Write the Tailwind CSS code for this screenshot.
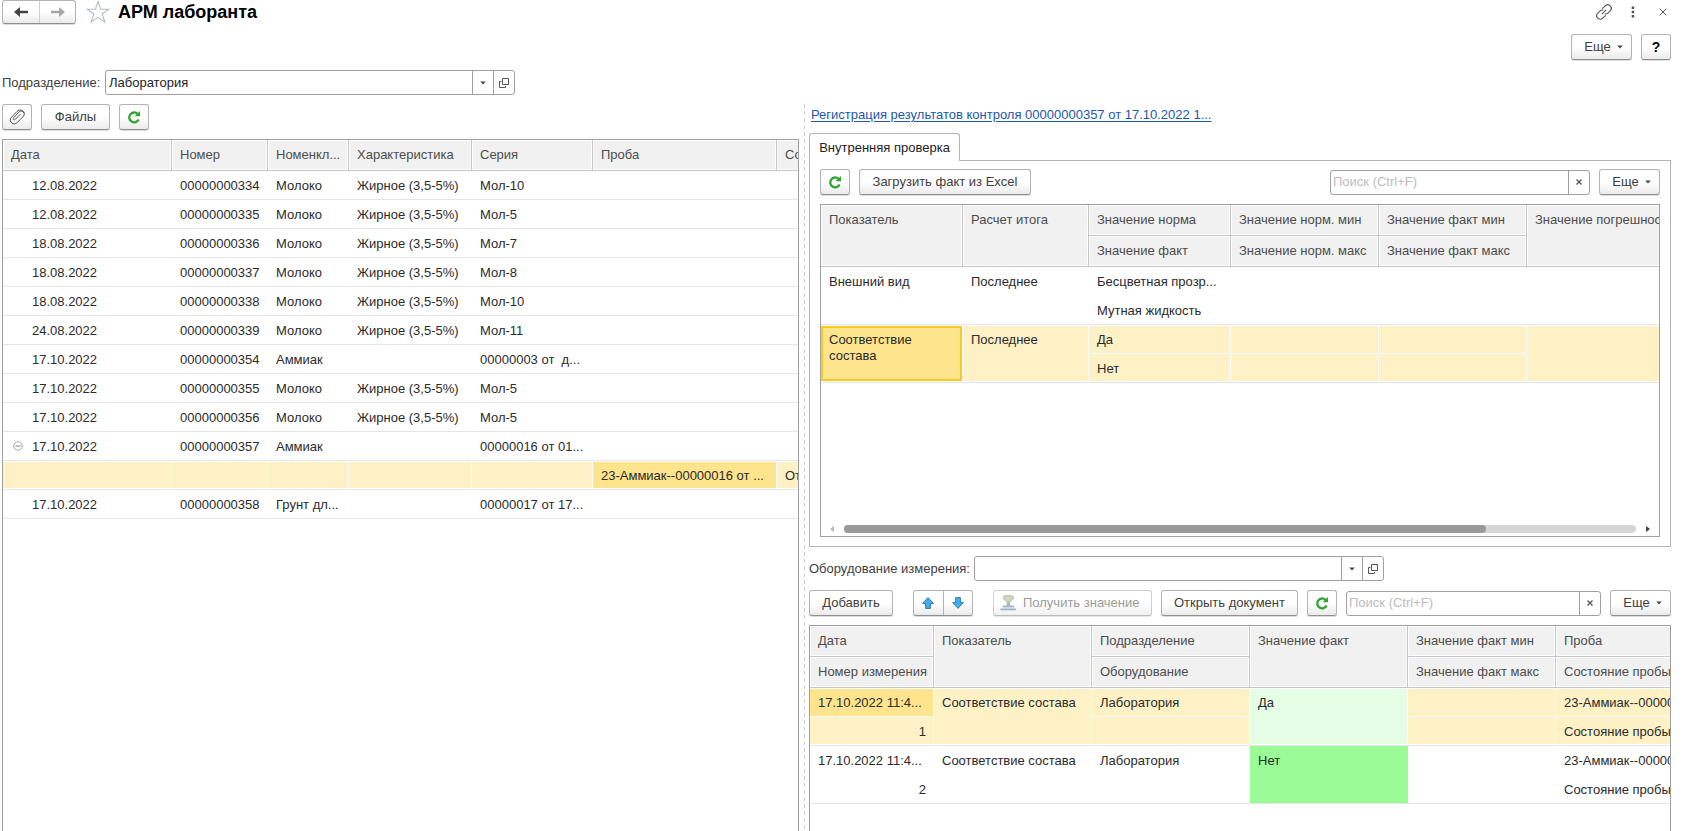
<!DOCTYPE html>
<html lang="ru">
<head>
<meta charset="utf-8">
<title>АРМ лаборанта</title>
<script src="https://cdn.jsdelivr.net/npm/@tailwindcss/browser@4"></script>
</head>
<body class="bg-white font-['Liberation_Sans',Arial,sans-serif] text-[13px] leading-4 text-[#404040]">
<svg class="hidden" aria-hidden="true">
  <symbol id="refresh" viewBox="0 0 14 14">
    <path d="M10.6 3.9A4.9 4.9 0 1 0 11.6 9.4" fill="none" stroke="#2fa42f" stroke-width="2.3"/>
    <path d="M13 0.9V6.3H7.6z" fill="#2fa42f"/>
  </symbol>
  <symbol id="caret" viewBox="0 0 6 4"><path d="M0.3 0.5H5.7L3 3.5z" fill="#444"/></symbol>
  <symbol id="open" viewBox="0 0 10 10">
    <path d="M3.5 0.5H9.5V6.5H3.5zM2.5 3.5H0.5V9.5H6.5V8" fill="none" stroke="#555"/>
  </symbol>
  <symbol id="cross" viewBox="0 0 8 8"><path d="M1.5 1.5L6.5 6.5M6.5 1.5L1.5 6.5" stroke="#555" stroke-width="1.3"/></symbol>
</svg>

<main class="flex h-screen flex-col overflow-hidden pl-[2px] pr-3">
  <header class="flex h-[26px] shrink-0 items-start">
    <div class="flex h-6 rounded-[3px] border border-[#b3b3b3] border-b-[#909090] bg-linear-to-b from-white from-50% to-[#ebebeb] shadow-[0_1px_0_#ddd]">
      <button class="flex w-9 items-center justify-center" aria-label="Назад">
        <svg class="h-3 w-[14px]" viewBox="0 0 14 12"><path d="M0 6L6 1V4.8H14V7.2H6V11z" fill="#444"/></svg>
      </button>
      <button class="flex w-9 items-center justify-center border-l border-[#cfcfcf]" aria-label="Вперед">
        <svg class="h-3 w-[14px]" viewBox="0 0 14 12"><path d="M14 6L8 1V4.8H0V7.2H8V11z" fill="#a6a6a6"/></svg>
      </button>
    </div>
    <button class="ml-[10px]" aria-label="В избранное">
      <svg class="size-6" viewBox="0 0 24 24"><path d="M12 1.8L14.6 9.3H22.8L16.2 14L18.9 22.2L12 17.3L5.1 22.2L7.8 14L1.2 9.3H9.4z" fill="none" stroke="#b4bcc6" stroke-width="1.1"/></svg>
    </button>
    <h1 class="ml-2 mt-[2px] text-lg font-bold leading-5 text-black">АРМ лаборанта</h1>
    <div class="ml-auto mt-[2px] flex items-center">
      <button class="mr-[10px]" aria-label="Получить ссылку">
        <svg class="size-4" viewBox="0 0 16 16" fill="none" stroke="#555" stroke-width="1.1" stroke-linecap="round"><path d="M6.6 4.4L9.2 1.8A2.9 2.9 0 0 1 14.2 6.8L11.6 9.4M9.4 11.6L6.8 14.2A2.9 2.9 0 0 1 1.8 9.2L4.4 6.6M6.2 9.8L9.8 6.2M9.2 9.9Q10.4 10.4 11.6 9.4M4.4 6.6Q5.6 5.6 6.8 6.1"/></svg>
      </button>
      <button class="mr-[15px] p-1" aria-label="Меню">
        <svg class="h-3 w-[14px]" viewBox="0 0 14 12" fill="#555"><path d="M5.7 0.5h2.5v2.5h-2.5zM5.7 4.7h2.5v2.5h-2.5zM5.7 8.9h2.5v2.5h-2.5z"/></svg>
      </button>
      <button class="mr-1" aria-label="Закрыть"><svg class="size-2" viewBox="0 0 8 8"><path d="M0.7 0.7L7.3 7.3M7.3 0.7L0.7 7.3" stroke="#555"/></svg></button>
    </div>
  </header>

  <div class="mt-2 flex h-[26px] shrink-0 justify-end gap-[9px]">
    <button class="flex w-[61px] items-center justify-center gap-[6px] rounded-[3px] border border-[#b3b3b3] border-b-[#909090] bg-linear-to-b from-white from-50% to-[#ebebeb] pl-1 shadow-[0_1px_0_#ddd]">Еще <svg class="h-1 w-[6px]"><use href="#caret"/></svg></button>
    <button class="w-[30px] rounded-[3px] border border-[#b3b3b3] border-b-[#909090] bg-linear-to-b from-white from-50% to-[#ebebeb] text-sm font-bold text-black shadow-[0_1px_0_#ddd]">?</button>
  </div>

  <div class="mt-[10px] flex h-[25px] shrink-0 items-center">
    <label for="dept" class="w-[103px]">Подразделение:</label>
    <div class="flex h-[25px] w-[410px] overflow-hidden rounded-[3px] border border-[#a0a0a0]">
      <input id="dept" value="Лаборатория" class="min-w-0 flex-1 px-[3px] text-[#222] outline-none">
      <button class="flex w-[21px] items-center justify-center border-l border-[#a0a0a0]" aria-label="Выбрать"><svg class="h-1 w-[6px]"><use href="#caret"/></svg></button>
      <button class="flex w-[21px] items-center justify-center border-l border-[#a0a0a0]" aria-label="Открыть"><svg class="size-[10px]"><use href="#open"/></svg></button>
    </div>
  </div>

  <div class="mt-[9px] grid min-h-0 flex-1 grid-cols-[minmax(0,797fr)_10px_minmax(0,862fr)]">
    <section class="flex min-h-0 flex-col">
      <div class="flex h-[26px] shrink-0 gap-[9px]">
        <button class="flex w-[30px] items-center justify-center rounded-[3px] border border-[#b3b3b3] border-b-[#909090] bg-linear-to-b from-white from-50% to-[#ebebeb] shadow-[0_1px_0_#ddd]" aria-label="Присоединенные файлы">
          <svg class="size-[18px]" viewBox="0 0 18 18" fill="none" stroke="#555" stroke-linecap="round"><path d="M12.2 6.4L7.4 11.4A1.2 1.2 0 0 1 5.6 9.7L10.8 4.2A2.9 2.9 0 0 1 15.6 8L9.2 14.6A4 4 0 0 1 2.6 10.2L9 3.4A4.3 4.3 0 0 1 16.4 5.4"/></svg>
        </button>
        <button class="w-[69px] rounded-[3px] border border-[#b3b3b3] border-b-[#909090] bg-linear-to-b from-white from-50% to-[#ebebeb] shadow-[0_1px_0_#ddd]">Файлы</button>
        <button class="flex w-[30px] items-center justify-center rounded-[3px] border border-[#b3b3b3] border-b-[#909090] bg-linear-to-b from-white from-50% to-[#ebebeb] shadow-[0_1px_0_#ddd]" aria-label="Обновить"><svg class="size-[14px]"><use href="#refresh"/></svg></button>
      </div>
      <div class="mt-[9px] min-h-0 flex-1 overflow-hidden border border-b-0 border-[#a0a0a0]">
        <table class="w-[874px] table-fixed border-separate border-spacing-0 whitespace-nowrap text-left text-[#2b2b2b] [&_td]:h-[29px] [&_td]:overflow-hidden [&_td]:border-b [&_td]:border-[#e3e5e6] [&_td]:px-2 [&_td]:pt-[2px] [&_td:first-child]:pl-[29px] [&_th]:h-[31px] [&_th]:overflow-hidden [&_th]:border-b [&_th]:border-r [&_th]:border-[#c6c6c6] [&_th]:bg-[#f1f1f1] [&_th]:px-2 [&_th]:font-normal [&_th]:text-[#4d4d4d] [&_th]:shadow-[inset_0_0_0_1px_#fff]">
          <colgroup><col class="w-[169px]"><col class="w-24"><col class="w-[81px]"><col class="w-[123px]"><col class="w-[121px]"><col class="w-[184px]"><col class="w-[100px]"></colgroup>
          <thead><tr><th>Дата</th><th>Номер</th><th>Номенкл...</th><th>Характеристика</th><th>Серия</th><th>Проба</th><th>Состояние</th></tr></thead>
          <tbody>
            <tr><td>12.08.2022</td><td>00000000334</td><td>Молоко</td><td>Жирное (3,5-5%)</td><td>Мол-10</td><td></td><td></td></tr>
            <tr><td>12.08.2022</td><td>00000000335</td><td>Молоко</td><td>Жирное (3,5-5%)</td><td>Мол-5</td><td></td><td></td></tr>
            <tr><td>18.08.2022</td><td>00000000336</td><td>Молоко</td><td>Жирное (3,5-5%)</td><td>Мол-7</td><td></td><td></td></tr>
            <tr><td>18.08.2022</td><td>00000000337</td><td>Молоко</td><td>Жирное (3,5-5%)</td><td>Мол-8</td><td></td><td></td></tr>
            <tr><td>18.08.2022</td><td>00000000338</td><td>Молоко</td><td>Жирное (3,5-5%)</td><td>Мол-10</td><td></td><td></td></tr>
            <tr><td>24.08.2022</td><td>00000000339</td><td>Молоко</td><td>Жирное (3,5-5%)</td><td>Мол-11</td><td></td><td></td></tr>
            <tr><td>17.10.2022</td><td>00000000354</td><td>Аммиак</td><td></td><td>00000003 от &nbsp;д...</td><td></td><td></td></tr>
            <tr><td>17.10.2022</td><td>00000000355</td><td>Молоко</td><td>Жирное (3,5-5%)</td><td>Мол-5</td><td></td><td></td></tr>
            <tr><td>17.10.2022</td><td>00000000356</td><td>Молоко</td><td>Жирное (3,5-5%)</td><td>Мол-5</td><td></td><td></td></tr>
            <tr><td class="relative"><button class="absolute left-[10px] top-[9px]" aria-label="Свернуть"><svg class="size-[10px]" viewBox="0 0 10 10" fill="none"><circle cx="5" cy="5" r="4.3" stroke="#aaa"/><path d="M2.5 5H7.5" stroke="#777"/></svg></button>17.10.2022</td><td>00000000357</td><td>Аммиак</td><td></td><td>00000016 от 01...</td><td></td><td></td></tr>
            <tr class="[&_td]:bg-[#fdf1c5] [&_td]:shadow-[inset_0_1px_0_#fff,inset_-1px_-1px_0_#fff]"><td></td><td></td><td></td><td></td><td></td><td class="bg-[#fde48d]!">23-Аммиак--00000016 от ...</td><td>Отобрана</td></tr>
            <tr><td>17.10.2022</td><td>00000000358</td><td>Грунт дл...</td><td></td><td>00000017 от 17...</td><td></td><td></td></tr>
          </tbody>
        </table>
      </div>
    </section>

    <div class="flex justify-center"><div class="w-px bg-[repeating-linear-gradient(to_bottom,#cfcfcf_0_4px,transparent_4px_7px)]"></div></div>

    <section class="flex min-h-0 flex-col">
      <a href="#" class="ml-[2px] mt-[3px] shrink-0 self-start text-[#1c57b0] underline underline-offset-2">Регистрация результатов контроля 00000000357 от 17.10.2022 1...</a>
      <div class="mt-[10px] flex shrink-0">
        <button class="relative z-10 -mb-px h-7 w-[151px] rounded-t-[3px] border border-b-0 border-[#b3b3b3] bg-white text-[#222]">Внутренняя проверка</button>
      </div>
      <div class="flex min-h-0 flex-[368_0_0] flex-col border border-[#b3b3b3] px-[10px] pb-[9px] pt-2">
        <div class="flex h-[26px] shrink-0 items-center gap-[9px]">
          <button class="flex h-full w-[30px] items-center justify-center rounded-[3px] border border-[#b3b3b3] border-b-[#909090] bg-linear-to-b from-white from-50% to-[#ebebeb] shadow-[0_1px_0_#ddd]" aria-label="Обновить"><svg class="size-[14px]"><use href="#refresh"/></svg></button>
          <button class="h-full w-[172px] rounded-[3px] border border-[#b3b3b3] border-b-[#909090] bg-linear-to-b from-white from-50% to-[#ebebeb] shadow-[0_1px_0_#ddd]">Загрузить факт из Excel</button>
          <div class="ml-auto flex h-[25px] w-[260px] overflow-hidden rounded-[3px] border border-[#a0a0a0]">
            <input aria-label="Поиск" placeholder="Поиск (Ctrl+F)" class="min-w-0 flex-1 px-[2px] outline-none placeholder:text-[#bdbdbd]">
            <button class="flex w-[21px] items-center justify-center border-l border-[#a0a0a0]" aria-label="Очистить"><svg class="size-2"><use href="#cross"/></svg></button>
          </div>
          <button class="flex h-full w-[61px] items-center justify-center gap-[6px] rounded-[3px] border border-[#b3b3b3] border-b-[#909090] bg-linear-to-b from-white from-50% to-[#ebebeb] pl-1 shadow-[0_1px_0_#ddd]">Еще <svg class="h-1 w-[6px]"><use href="#caret"/></svg></button>
        </div>
        <div class="mt-[9px] flex min-h-0 flex-1 flex-col overflow-hidden border border-[#a0a0a0]">
          <table class="w-[916px] table-fixed border-separate border-spacing-0 whitespace-nowrap text-left align-top text-[#2b2b2b] [&_td]:h-[29px] [&_td]:overflow-hidden [&_td]:px-2 [&_td]:pt-[7px] [&_td]:align-top [&_th]:h-[31px] [&_th]:overflow-hidden [&_th]:border-b [&_th]:border-r [&_th]:border-[#c6c6c6] [&_th]:bg-[#f1f1f1] [&_th]:px-2 [&_th]:pt-[7px] [&_th]:align-top [&_th]:font-normal [&_th]:text-[#4d4d4d] [&_th]:shadow-[inset_0_0_0_1px_#fff]">
            <colgroup><col class="w-[142px]"><col class="w-[126px]"><col class="w-[142px]"><col class="w-[148px]"><col class="w-[148px]"><col class="w-[210px]"></colgroup>
            <thead>
              <tr><th rowspan="2">Показатель</th><th rowspan="2">Расчет итога</th><th>Значение норма</th><th>Значение норм. мин</th><th>Значение факт мин</th><th rowspan="2">Значение погрешности</th></tr>
              <tr><th>Значение факт</th><th>Значение норм. макс</th><th>Значение факт макс</th></tr>
            </thead>
            <tbody>
              <tr><td rowspan="2" class="border-b border-[#e3e5e6]">Внешний вид</td><td rowspan="2" class="border-b border-[#e3e5e6]">Последнее</td><td>Бесцветная прозр...</td><td></td><td></td><td rowspan="2" class="border-b border-[#e3e5e6]"></td></tr>
              <tr class="[&_td]:border-b [&_td]:border-[#e3e5e6]"><td>Мутная жидкость</td><td></td><td></td></tr>
              <tr class="[&_td]:bg-[#fdf1c5] [&_td]:shadow-[inset_0_1px_0_#fff,inset_-1px_-1px_0_#fff]"><td rowspan="2" class="relative whitespace-normal border-b border-[#e3e5e6] bg-[#fde48d]!"><span class="absolute bottom-px left-0 right-px top-px border-2 border-[#f9c91f]"></span>Соответствие состава</td><td rowspan="2" class="border-b border-[#e3e5e6]">Последнее</td><td>Да</td><td></td><td></td><td rowspan="2" class="border-b border-[#e3e5e6]"></td></tr>
              <tr class="[&_td]:border-b [&_td]:border-[#e3e5e6] [&_td]:bg-[#fdf1c5] [&_td]:shadow-[inset_-1px_-1px_0_#fff]"><td>Нет</td><td></td><td></td></tr>
            </tbody>
          </table>
          <div class="mb-[3px] mt-auto flex h-2 items-center justify-between px-[9px]">
            <svg class="h-[6px] w-1" viewBox="0 0 4 6"><path d="M4 0V6L0 3z" fill="#b5b5b5"/></svg>
            <div class="mx-[10px] h-2 flex-1 rounded-full bg-[#d6d6d6]"><div class="h-2 w-[81%] rounded-full bg-[#999]"></div></div>
            <svg class="h-[6px] w-1" viewBox="0 0 4 6"><path d="M0 0V6L4 3z" fill="#444"/></svg>
          </div>
        </div>
      </div>

      <div class="mt-[9px] flex h-[25px] shrink-0 items-center">
        <label for="equip" class="w-[165px]">Оборудование измерения:</label>
        <div class="flex h-[25px] w-[410px] overflow-hidden rounded-[3px] border border-[#a0a0a0]">
          <input id="equip" class="min-w-0 flex-1 px-[3px] outline-none">
          <button class="flex w-[21px] items-center justify-center border-l border-[#a0a0a0]" aria-label="Выбрать"><svg class="h-1 w-[6px]"><use href="#caret"/></svg></button>
          <button class="flex w-[21px] items-center justify-center border-l border-[#a0a0a0]" aria-label="Открыть"><svg class="size-[10px]"><use href="#open"/></svg></button>
        </div>
      </div>

      <div class="mt-[9px] flex h-[26px] shrink-0 items-center gap-[9px]">
        <button class="h-full w-[84px] rounded-[3px] border border-[#b3b3b3] border-b-[#909090] bg-linear-to-b from-white from-50% to-[#ebebeb] shadow-[0_1px_0_#ddd]">Добавить</button>
        <div class="mx-[11px] flex h-full w-[60px] rounded-[3px] border border-[#b3b3b3] border-b-[#909090] bg-linear-to-b from-white from-50% to-[#ebebeb] shadow-[0_1px_0_#ddd]">
          <button class="flex flex-1 items-center justify-center" aria-label="Вверх"><svg class="size-3" viewBox="0 0 12 12"><path d="M6 0.6L11.4 6.4H8.4V11.4H3.6V6.4H0.6z" fill="#45aeea" stroke="#2c7db5"/></svg></button>
          <button class="flex flex-1 items-center justify-center border-l border-[#b3b3b3]" aria-label="Вниз"><svg class="size-3" viewBox="0 0 12 12"><path d="M6 11.4L11.4 5.6H8.4V0.6H3.6V5.6H0.6z" fill="#45aeea" stroke="#2c7db5"/></svg></button>
        </div>
        <button disabled class="flex h-full w-[159px] items-center gap-[7px] rounded-[3px] border border-[#cfcfcf] border-b-[#bbb] bg-linear-to-b from-white from-50% to-[#f0f0f0] pl-[6px] text-left text-[#9a9a9a] shadow-[0_1px_0_#e6e6e6]">
          <svg class="size-4" viewBox="0 0 16 16"><path d="M3.2 2.6Q3.4 0.8 5.4 0.6H11.4Q13.4 0.8 13.6 2.6Q13.6 4.6 11.6 5.4L10.2 7H6.6L5.2 5.4Q3.2 4.6 3.2 2.6z" fill="#d5d3b8" stroke="#b3b9b4" stroke-width="0.8"/><path d="M6.9 7H9.9L10.3 10.6H14.2V12.4H2.6V10.6H6.5z" fill="#a9b8c2"/><path d="M0.4 14.4H15.8" stroke="#a0b0bb" stroke-width="1.8"/></svg>
          <span>Получить значение</span>
        </button>
        <button class="h-full w-[137px] rounded-[3px] border border-[#b3b3b3] border-b-[#909090] bg-linear-to-b from-white from-50% to-[#ebebeb] shadow-[0_1px_0_#ddd]">Открыть документ</button>
        <button class="flex h-full w-[30px] items-center justify-center rounded-[3px] border border-[#b3b3b3] border-b-[#909090] bg-linear-to-b from-white from-50% to-[#ebebeb] shadow-[0_1px_0_#ddd]" aria-label="Обновить"><svg class="size-[14px]"><use href="#refresh"/></svg></button>
        <div class="flex h-[25px] min-w-0 flex-1 overflow-hidden rounded-[3px] border border-[#a0a0a0]">
          <input aria-label="Поиск" placeholder="Поиск (Ctrl+F)" class="min-w-0 flex-1 px-[2px] outline-none placeholder:text-[#bdbdbd]">
          <button class="flex w-[21px] items-center justify-center border-l border-[#a0a0a0]" aria-label="Очистить"><svg class="size-2"><use href="#cross"/></svg></button>
        </div>
        <button class="flex h-full w-[61px] items-center justify-center gap-[6px] rounded-[3px] border border-[#b3b3b3] border-b-[#909090] bg-linear-to-b from-white from-50% to-[#ebebeb] pl-1 shadow-[0_1px_0_#ddd]">Еще <svg class="h-1 w-[6px]"><use href="#caret"/></svg></button>
      </div>

      <div class="mt-[9px] min-h-0 flex-[205_0_0] overflow-hidden border border-b-0 border-[#a0a0a0]">
        <table class="w-[946px] table-fixed border-separate border-spacing-0 whitespace-nowrap text-left text-[#2b2b2b] [&_td]:h-[29px] [&_td]:overflow-hidden [&_td]:px-2 [&_td]:pt-[7px] [&_td]:align-top [&_th]:h-[31px] [&_th]:overflow-hidden [&_th]:border-b [&_th]:border-r [&_th]:border-[#c6c6c6] [&_th]:bg-[#f1f1f1] [&_th]:px-2 [&_th]:pt-[7px] [&_th]:align-top [&_th]:font-normal [&_th]:text-[#4d4d4d] [&_th]:shadow-[inset_0_0_0_1px_#fff]">
          <colgroup><col class="w-[124px]"><col class="w-[158px]"><col class="w-[158px]"><col class="w-[158px]"><col class="w-[148px]"><col class="w-[200px]"></colgroup>
          <thead>
            <tr><th>Дата</th><th rowspan="2">Показатель</th><th>Подразделение</th><th rowspan="2">Значение факт</th><th>Значение факт мин</th><th>Проба</th></tr>
            <tr><th>Номер измерения</th><th>Оборудование</th><th>Значение факт макс</th><th>Состояние пробы</th></tr>
          </thead>
          <tbody>
            <tr class="[&_td]:bg-[#fdf1c5] [&_td]:shadow-[inset_0_1px_0_#fff,inset_-1px_-1px_0_#fff]"><td class="bg-[#fde48d]!">17.10.2022 11:4...</td><td rowspan="2" class="border-b border-[#e3e5e6]">Соответствие состава</td><td>Лаборатория</td><td rowspan="2" class="border-b border-[#e3e5e6] bg-[#e4fde4]!">Да</td><td></td><td>23-Аммиак--00000016</td></tr>
            <tr class="[&_td]:border-b [&_td]:border-[#e3e5e6] [&_td]:bg-[#fdf1c5] [&_td]:shadow-[inset_-1px_-1px_0_#fff]"><td class="text-right">1</td><td></td><td></td><td>Состояние пробы</td></tr>
            <tr><td>17.10.2022 11:4...</td><td rowspan="2" class="border-b border-[#e3e5e6]">Соответствие состава</td><td>Лаборатория</td><td rowspan="2" class="border-b border-[#e3e5e6] bg-[#9afb97]">Нет</td><td></td><td>23-Аммиак--00000016</td></tr>
            <tr class="[&_td]:border-b [&_td]:border-[#e3e5e6]"><td class="text-right">2</td><td></td><td></td><td>Состояние пробы</td></tr>
          </tbody>
        </table>
      </div>
    </section>
  </div>
</main>
</body>
</html>
